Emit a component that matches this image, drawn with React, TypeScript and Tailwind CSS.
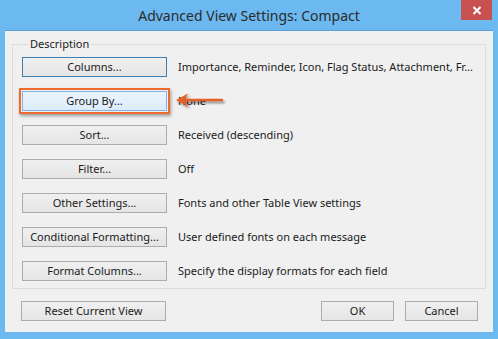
import React from "react";

// rows of the Description group box
const rows = [
  { label: "Columns...", text: "Importance, Reminder, Icon, Flag Status, Attachment, Fr...", kind: "default" },
  { label: "Group By...", text: "None", kind: "hot" },
  { label: "Sort...", text: "Received (descending)", kind: "" },
  { label: "Filter...", text: "Off", kind: "" },
  { label: "Other Settings...", text: "Fonts and other Table View settings", kind: "" },
  { label: "Conditional Formatting...", text: "User defined fonts on each message", kind: "" },
  { label: "Format Columns...", text: "Specify the display formats for each field", kind: "" },
];

function Btn({ label, kind, className = "" }: { label: string; kind?: string; className?: string }) {
  let tone = "border-[#acacac] bg-gradient-to-b from-[#f0f0f0] to-[#e5e5e5]";
  if (kind === "default") tone = "border-[#3c7fb1] bg-gradient-to-b from-[#f0f0f0] to-[#e5e5e5]";
  if (kind === "hot") tone = "border-[#7eb4ea] bg-gradient-to-b from-[#ecf4fc] to-[#dcecfc]";
  return (
    <div className={`h-[20px] shrink-0 flex items-center justify-center border text-[11px] text-[#1a1a1a] ${tone} ${className}`}>
      {label}
    </div>
  );
}

function Arrow() {
  return (
    <svg width="52" height="20" viewBox="0 0 52 20" className="absolute left-[-4px] top-[-3px]">
      <defs>
        <filter id="sh" x="-20%" y="-50%" width="140%" height="200%">
          <feDropShadow dx="1.5" dy="2" stdDeviation="1.2" floodColor="#000" floodOpacity="0.45" />
        </filter>
      </defs>
      <g filter="url(#sh)">
        <line x1="10" y1="10" x2="48" y2="10" stroke="#e2602a" strokeWidth="2.5" strokeLinecap="round" />
        <path d="M2 10 L14 3.5 L11 10 L14 16.5 Z" fill="#e2602a" />
      </g>
    </svg>
  );
}

export default function App() {
  return (
    <div
      className="w-[498px] h-[339px] bg-[#6cb8f0] flex flex-col overflow-hidden"
      style={{ fontFamily: '"Noto Sans", "Open Sans", sans-serif' }}
    >
      <div className="h-[30px] shrink-0 relative flex items-center justify-center">
        <span className="text-[14px] text-[#2b2b2b] pt-[1px]">Advanced View Settings: Compact</span>
        <div className="absolute right-[6px] top-0 w-[31px] h-[20px] bg-[#c75050] flex items-center justify-center">
          <svg width="10" height="9" viewBox="0 0 10 9">
            <path d="M1.5 1 L8.5 8 M8.5 1 L1.5 8" stroke="#fff" strokeWidth="2" />
          </svg>
        </div>
      </div>

      <div className="mx-[5px] h-[302px] shrink-0 bg-[#f0f0f0] border-t border-[#5d9fd4] px-[7px] pt-[6px] flex flex-col">
        <fieldset className="border border-[#dcdcdc] pl-[9px] pr-[8px] pb-[7px] pt-0 m-0 min-w-0">
          <legend className="ml-[6px] px-[2px] text-[11px] text-[#1a1a1a] leading-[14px]">Description</legend>
          <div className="flex flex-col gap-[14px] pt-[6px]">
            {rows.map((r) => (
              <div key={r.label} className="flex items-center">
                {r.kind === "hot" ? (
                  <div className="relative w-[145px] h-[20px] shrink-0">
                    <div className="absolute inset-[-3px] border-2 border-[#ee6a2e] shadow-[1px_2px_3px_rgba(0,0,0,0.35)]" />
                    <Btn label={r.label} kind={r.kind} className="w-[145px]" />
                  </div>
                ) : (
                  <Btn label={r.label} kind={r.kind} className="w-[145px]" />
                )}
                <div className="relative ml-[11px] text-[11px] text-[#1a1a1a] whitespace-nowrap">
                  {r.text}
                  {r.kind === "hot" && <Arrow />}
                </div>
              </div>
            ))}
          </div>
        </fieldset>

        <div className="flex items-center mt-[12px] pl-[9px] pr-[8px]">
          <Btn label="Reset Current View" className="w-[145px]" />
          <div className="flex-1" />
          <Btn label="OK" className="w-[73px]" />
          <Btn label="Cancel" className="w-[73px] ml-[11px]" />
        </div>
      </div>
    </div>
  );
}
